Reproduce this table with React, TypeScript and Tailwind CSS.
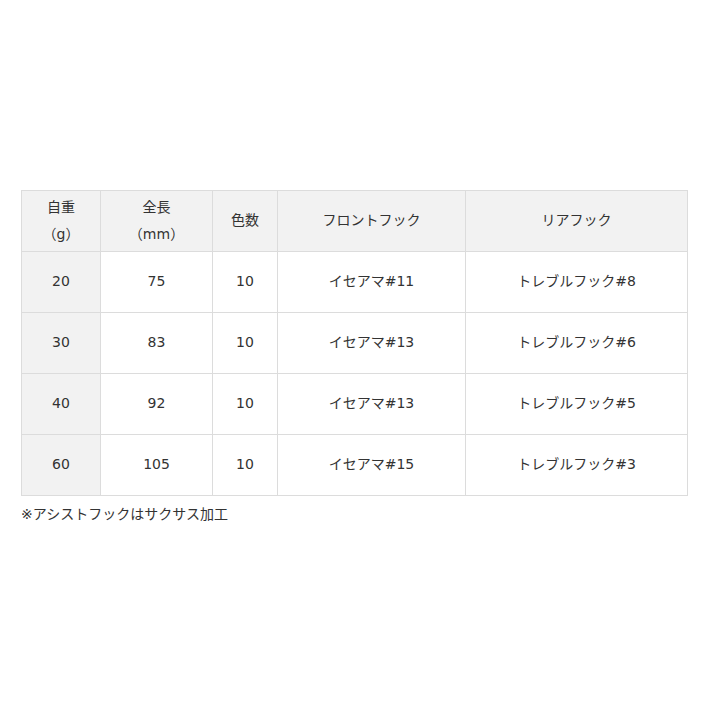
import React from "react";

const rows = [
  ["20", "75", "10", "イセアマ#11", "トレブルフック#8"],
  ["30", "83", "10", "イセアマ#13", "トレブルフック#6"],
  ["40", "92", "10", "イセアマ#13", "トレブルフック#5"],
  ["60", "105", "10", "イセアマ#15", "トレブルフック#3"],
];

const cell =
  "flex flex-col items-center justify-center border-r border-b border-[#dcdcdc] h-[61px] text-center";
const one = `${cell} pb-[2px]`;

export default function App() {
  return (
    <div
      className="w-[708px] h-[708px] bg-white pt-[190px] pl-[21px] text-[14px] text-[#333333]"
      style={{ fontFamily: '"DejaVu Sans", "Noto Sans CJK JP", sans-serif' }}
    >
      <div className="grid grid-cols-[79px_112px_65px_188px_222px] w-[667px] border-l border-t border-[#dcdcdc]">
        <div className={`${cell} bg-[#f2f2f2] leading-[27px]`}>
          <span>自重</span>
          <span>（g）</span>
        </div>
        <div className={`${cell} bg-[#f2f2f2] leading-[27px]`}>
          <span>全長</span>
          <span>（mm）</span>
        </div>
        <div className={`${one} bg-[#f2f2f2]`}>色数</div>
        <div className={`${one} bg-[#f2f2f2]`}>フロントフック</div>
        <div className={`${one} bg-[#f2f2f2]`}>リアフック</div>
        {rows.map((r, i) => (
          <React.Fragment key={i}>
            <div className={`${one} bg-[#f2f2f2]`}>{r[0]}</div>
            <div className={`${one} bg-white`}>{r[1]}</div>
            <div className={`${one} bg-white`}>{r[2]}</div>
            <div className={`${one} bg-white`}>{r[3]}</div>
            <div className={`${one} bg-white`}>{r[4]}</div>
          </React.Fragment>
        ))}
      </div>
      <p className="mt-[8px] leading-[21px]">※アシストフックはサクサス加工</p>
    </div>
  );
}
